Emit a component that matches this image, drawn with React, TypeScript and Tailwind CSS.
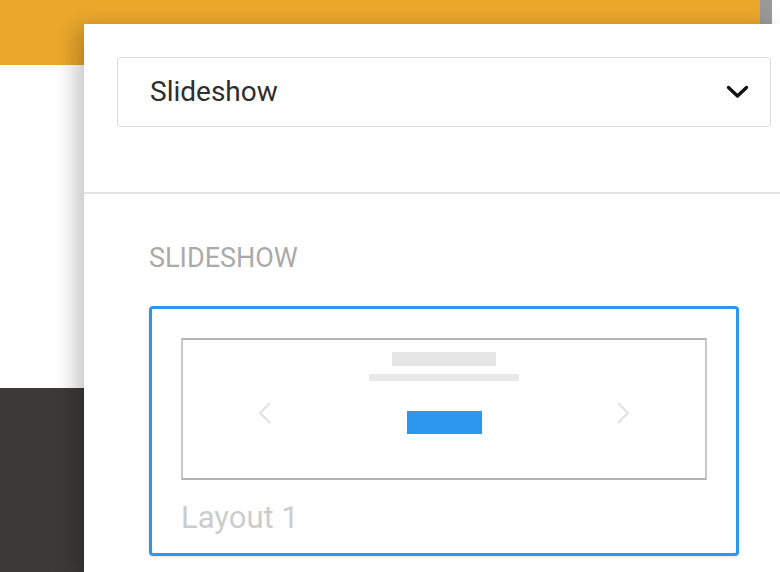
import React from "react";

function Chevron({ dir }: { dir: "left" | "right" }) {
  return (
    <svg width="14" height="22" viewBox="0 0 14 22" fill="none">
      <polyline
        points={dir === "left" ? "12,1 2,11 12,21" : "2,1 12,11 2,21"}
        stroke="#e0e0e0"
        strokeWidth="2"
      />
    </svg>
  );
}

function LayoutCard() {
  return (
    <div className="rounded-[4px] border-[3px] border-[#2d96ef] px-[29px] pt-[29px] pb-[19px] shadow-[0_1px_3px_rgba(0,0,0,0.12)]">
      {/* preview of the layout */}
      <div className="flex h-[142px] items-start border-2 border-[#c8c8c8] border-t-[#b4b4b4] border-b-[#b4b4b4] px-[75px]">
        <div className="mt-[62px]">
          <Chevron dir="left" />
        </div>
        <div className="flex flex-1 flex-col items-center pt-[12px]">
          <div className="h-[14px] w-[104px] bg-[#e6e6e6]" />
          <div className="mt-[8px] h-[7px] w-[150px] bg-[#e8e8e8]" />
          <div className="mt-[30px] h-[23px] w-[75px] bg-[#2d96ef]" />
        </div>
        <div className="mt-[62px]">
          <Chevron dir="right" />
        </div>
      </div>
      <p className="mt-[22px] text-[31px] leading-[32px] text-[#cccccc]">Layout 1</p>
    </div>
  );
}

export default function App() {
  return (
    <div
      className="relative flex h-[572px] w-[780px] flex-col overflow-hidden bg-white"
      style={{ fontFamily: "Roboto, 'Liberation Sans', sans-serif" }}
    >
      {/* page behind the drawer */}
      <div className="flex h-[65px]">
        <div className="flex-1 bg-[#eca82c]" />
        <div className="w-[12px] bg-[#999999]" />
        <div className="w-[8px] bg-white" />
      </div>
      <div className="flex-1 bg-white" />
      <div className="h-[184px] bg-[#3b3a39]" />

      {/* drawer */}
      <div className="absolute top-[24px] right-0 bottom-0 left-[84px] flex flex-col bg-white shadow-[-8px_4px_22px_rgba(0,0,0,0.24)]">
        <div className="pt-[33px] pr-[9px] pb-[65px] pl-[33px]">
          <div className="flex h-[70px] items-center justify-between rounded-[3px] border border-[#dddddd] pr-[21px] pl-[32px]">
            <span className="text-[28px] text-[#2e2e2e]">Slideshow</span>
            <svg width="23" height="14" viewBox="0 0 23 14" fill="none">
              <polyline
                points="2.5,2.5 11.5,11 20.5,2.5"
                stroke="#111111"
                strokeWidth="3.4"
                strokeLinecap="round"
                strokeLinejoin="round"
              />
            </svg>
          </div>
        </div>
        <div className="h-[2px] bg-[#e2e2e2]" />
        <div className="pt-[49px] pr-[41px] pl-[65px]">
          <h3 className="text-[27px] leading-[30px] text-[#aaaaaa] uppercase">Slideshow</h3>
          <div className="mt-[33px]">
            <LayoutCard />
          </div>
        </div>
      </div>
    </div>
  );
}
